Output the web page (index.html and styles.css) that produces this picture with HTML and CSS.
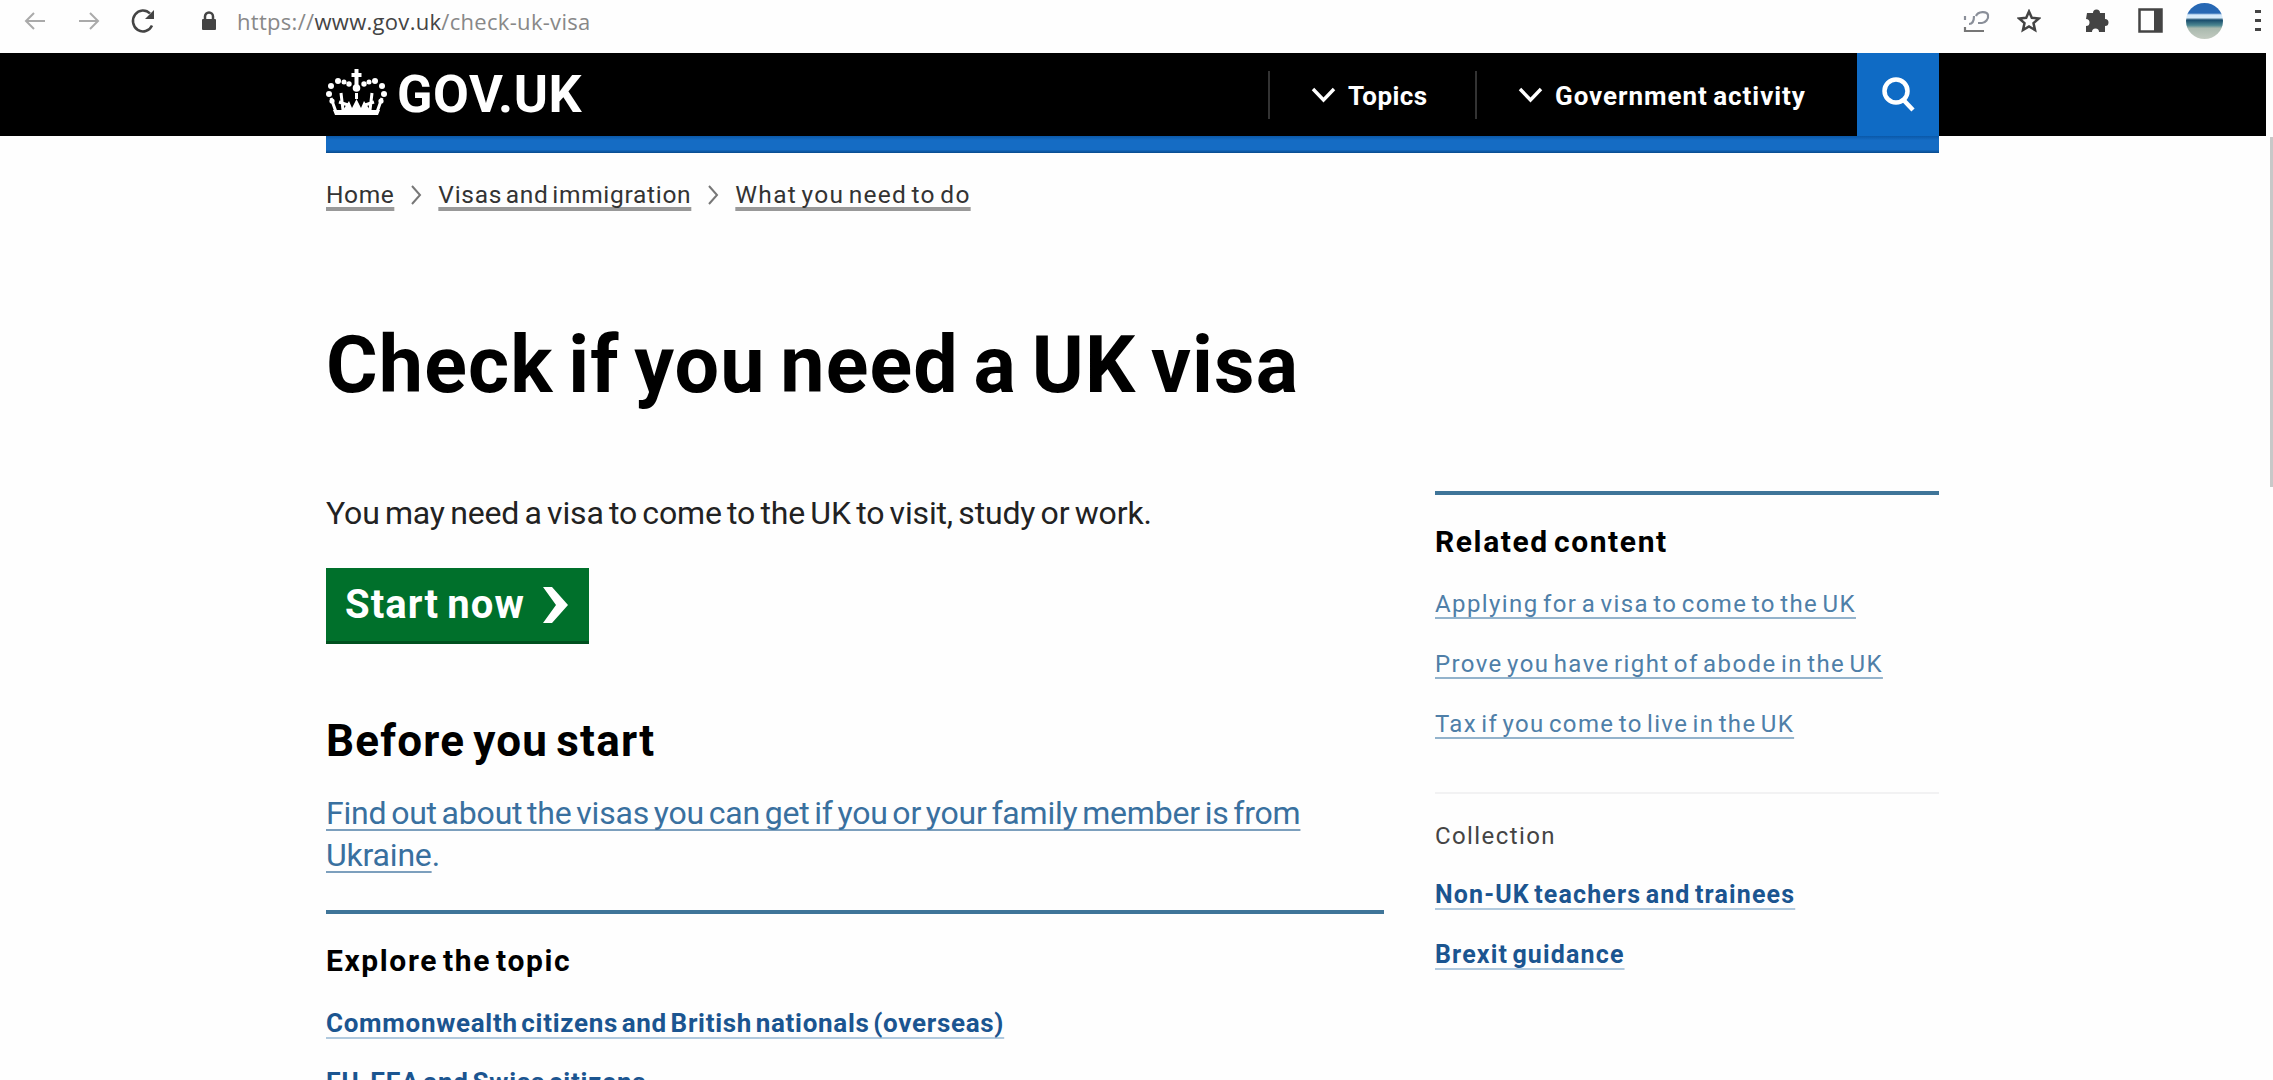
FILE: index.html
```html
<!DOCTYPE html>
<html lang="en">
<head>
    <meta charset="UTF-8">
    <meta name="viewport" content="width=device-width, initial-scale=1.0">
    <title>Check if you need a UK visa - GOV.UK</title>
    <link rel="stylesheet" href="styles.css">
</head>
<body>
    <div class="browser-bar">
        <svg class="back" width="22" height="20" viewBox="0 0 22 20"><path d="M21 10H2M10 2L2 10l8 8"/></svg>
        <svg class="forward" width="22" height="20" viewBox="0 0 22 20"><path d="M1 10h19M12 2l8 8-8 8"/></svg>
        <svg class="reload" width="26" height="26" viewBox="0 0 26 26"><path d="M22 17.5A10 10.5 0 1 1 20 5.500" /><path class="fill" d="M24 2v9h-9z"/></svg>
        <svg class="lock" width="14" height="20" viewBox="0 0 14 20"><path d="M3 9V5.500a4 4 0 0 1 8 0V9"/><rect class="fill" x="0" y="8" width="14" height="11" rx="1"/></svg>
        <span class="url">https://<b>www.gov.uk</b>/check-uk-visa</span>
        <div class="tools">
            <svg class="share" width="28" height="24" viewBox="0 0 28 24"><path d="M3 7v4M7 15c4 0 5-3 5-8M14 7c2-5 11-5 12-1s-3 8-6 8h-4"/><path class="base" d="M3 18v4h19"/></svg>
            <svg class="star" width="24" height="24" viewBox="0 0 24 24"><path d="M12 2.500l2.800 6.300 6.900.7-5.200 4.600 1.500 6.900-6-3.600-6 3.600 1.500-6.900-5.200-4.600 6.900-.7z"/></svg>
            <svg class="puzzle" width="25" height="25" viewBox="0 0 25 25"><path d="M3 5h6a3.500 3.500 0 0 1 7 0h5v6a3.500 3.500 0 0 1 0 7v6h-6a3.500 3.500 0 0 0-7 0H2v-6a3.500 3.500 0 0 0 0-7z"/></svg>
            <svg class="panel" width="25" height="25" viewBox="0 0 25 25"><rect x="1.500" y="1.500" width="22" height="22"/><path class="fill" d="M16 2h8v21h-8z"/></svg>
            <span class="avatar"></span>
            <svg class="dots" width="8" height="24" viewBox="0 0 8 24"><path d="M1 1h6v3H1zM1 10h6v3H1zM1 19h6v3H1z"/></svg>
        </div>
    </div>

    <header class="header">
        <div class="container header-inner">
            <a class="logo" href="#">
                <svg width="61" height="47" viewBox="0 0 61 47">
                    <path d="M7 41h47l-2 5H9z"/>
                    <path class="line" d="M5 29l5 14M56 29l-5 14M15 24l2 17M46 24l-2 17M13 33l9 3M48 33l-9 3M30.500 24v6"/>
                    <path d="M17 41l6-9 3 7 4.500-9 4.500 9 3-7 6 9z"/>
                    <path d="M28.500 0h4v20h-4zM25.500 4h10v4h-10z"/>
                    <circle cx="30.500" cy="19" r="3.800"/>
                    <circle cx="23" cy="15" r="2.700"/><circle cx="38" cy="15" r="2.700"/>
                    <circle cx="18" cy="13" r="2.500"/><circle cx="43" cy="13" r="2.500"/>
                    <circle cx="12" cy="12" r="3"/><circle cx="49" cy="12" r="3"/>
                    <circle cx="5" cy="17" r="3"/><circle cx="56" cy="17" r="3"/>
                    <circle cx="3" cy="25" r="3"/><circle cx="58" cy="25" r="3"/>
                    <circle cx="6" cy="32" r="2.600"/><circle cx="55" cy="32" r="2.600"/>
                </svg>
                <span>GOV.UK</span>
            </a>
            <nav class="nav">
                <a class="nav-item topics" href="#"><svg width="25" height="16" viewBox="0 0 25 16"><path d="M2 2l10.500 11L23 2"/></svg><span>Topics</span></a>
                <a class="nav-item activity" href="#"><svg width="25" height="16" viewBox="0 0 25 16"><path d="M2 2l10.500 11L23 2"/></svg><span>Government activity</span></a>
                <a class="search" href="#"><svg width="34" height="36" viewBox="0 0 34 36"><circle cx="14" cy="14" r="11.500"/><path d="M21.500 23L31 33"/></svg></a>
            </nav>
        </div>
    </header>

    <div class="container">
        <div class="blue-bar"></div>
        <nav class="breadcrumbs">
            <a class="crumb-home" href="#">Home</a>
            <svg width="12" height="20" viewBox="0 0 12 20"><path d="M2 1l8 9-8 9"/></svg>
            <a class="crumb-visas" href="#">Visas and immigration</a>
            <svg width="12" height="20" viewBox="0 0 12 20"><path d="M2 1l8 9-8 9"/></svg>
            <a class="crumb-what" href="#">What you need to do</a>
        </nav>
        <h1>Check if you need a UK visa</h1>
        <div class="columns">
            <main class="main">
                <p class="intro">You may need a visa to come to the UK to visit, study or work.</p>
                <a class="start" href="#"><span>Start now</span><svg width="26" height="36" viewBox="0 0 26 36"><path d="M0 0h9l16 18L9 36H0l13-18z"/></svg></a>
                <h2>Before you start</h2>
                <p class="ukraine"><a href="#">Find out about the visas you can get if you or your family member is from<br>Ukraine</a>.</p>
                <section class="explore">
                    <h3>Explore the topic</h3>
                    <a class="commonwealth" href="#">Commonwealth citizens and British nationals (overseas)</a>
                    <a class="swiss" href="#">EU, EEA and Swiss citizens</a>
                </section>
            </main>
            <aside class="related">
                <h3>Related content</h3>
                <ul>
                    <li><a class="applying" href="#">Applying for a visa to come to the UK</a></li>
                    <li><a class="prove" href="#">Prove you have right of abode in the UK</a></li>
                    <li><a class="tax" href="#">Tax if you come to live in the UK</a></li>
                </ul>
                <h4>Collection</h4>
                <ul class="bold">
                    <li><a class="teachers" href="#">Non-UK teachers and trainees</a></li>
                    <li><a class="brexit" href="#">Brexit guidance</a></li>
                </ul>
            </aside>
        </div>
    </div>
    <div class="scrollbar"></div>
</body>
</html>
```
FILE: styles.css
```css
* {
    box-sizing: border-box;
}
body {
    margin: 0;
    height: 1080px;
    overflow: hidden;
    background: #fefefe;
    color: #0b0c0c;
    font-family: Roboto, "Noto Sans", sans-serif;
    position: relative;
}
h1, h2, h3, h4, p, ul {
    margin: 0;
    padding: 0;
}
ul {
    list-style: none;
}
a {
    color: #39709f;
    text-decoration-thickness: 2px;
    text-decoration-skip-ink: none;
    text-underline-offset: 5px;
}
svg {
    display: block;
    flex: none;
}
.container {
    width: 1613px;
    margin-left: 326px;
}

/* browser toolbar */
.browser-bar {
    height: 53px;
    padding: 0 11px 12px 24px;
    display: flex;
    align-items: center;
}
.browser-bar svg {
    fill: none;
    stroke: #444;
    stroke-width: 2.5;
}
.browser-bar .fill {
    fill: #444;
    stroke: none;
}
.browser-bar .back, .browser-bar .forward {
    stroke: #aaa;
    stroke-width: 2;
}
.forward {
    margin-left: 32px;
}
.reload {
    margin-left: 30px;
}
.lock {
    margin-left: 46px;
}
.url {
    margin-left: 21px;
    font: 22px "Open Sans", sans-serif;
    letter-spacing: 0.3px;
    color: #888;
}
.url b {
    font-weight: normal;
    color: #444;
}
.tools {
    margin-left: auto;
    display: flex;
    align-items: center;
}
.browser-bar .share {
    stroke: #8a8f99;
    stroke-width: 2.2;
}
.share .base {
    stroke: #777;
}
.star {
    margin-left: 27px;
}
.browser-bar .puzzle, .browser-bar .dots {
    fill: #444;
    stroke: none;
}
.puzzle {
    margin-left: 43px;
}
.panel {
    margin-left: 29px;
}
.avatar {
    width: 37px;
    height: 36px;
    margin-left: 23px;
    border-radius: 50%;
    background: linear-gradient(#2768b4 28%, #d5eafa 33%, #d5eafa 41%, #174a6b 47%, #4c8791 62%, #a9b9ae 70%, #c3cbc1);
}
.dots {
    margin-left: 31px;
}

/* header */
.header {
    height: 83px;
    margin-right: 7px;
    background: #000;
}
.header-inner {
    height: 100%;
    display: flex;
    justify-content: space-between;
}
.header a {
    color: #fff;
    text-decoration: none;
    font-weight: bold;
}
.logo {
    display: flex;
    gap: 10px;
    padding-top: 16px;
    font-size: 52px;
    line-height: 52px;
    letter-spacing: 0.6px;
}
.logo svg {
    fill: #fff;
}
.logo .line {
    fill: none;
    stroke: #fff;
    stroke-width: 3;
}
.nav {
    display: flex;
    align-items: center;
}
.nav-item {
    height: 48px;
    display: flex;
    align-items: center;
    gap: 12px;
    padding-left: 41px;
    border-left: 2px solid #333;
    font-size: 26px;
}
.nav-item span {
    padding-top: 2px;
}
.nav-item svg {
    fill: none;
    stroke: #fff;
    stroke-width: 3.4;
}
.topics {
    width: 207px;
    letter-spacing: 0.4px;
}
.activity {
    width: 382px;
    letter-spacing: 0.95px;
    word-spacing: -2px;
}
.search {
    width: 82px;
    height: 83px;
    padding-left: 2px;
    display: flex;
    align-items: center;
    justify-content: center;
    background: #0f6bc5;
}
.search svg {
    fill: none;
    stroke: #fff;
    stroke-width: 4.5;
}
.blue-bar {
    height: 17px;
    background: linear-gradient(#0a58a8, #156cc4 25%, #156cc4 80%, #084a8c);
}

.breadcrumbs {
    display: flex;
    align-items: center;
    gap: 16px;
    height: 30px;
    margin-top: 27px;
    font-size: 24.5px;
    line-height: 30px;
    word-spacing: -3px;
}
.breadcrumbs a {
    color: #333;
    text-decoration-color: #999;
    text-decoration-thickness: 4px;
    text-underline-offset: 4px;
    white-space: nowrap;
}
.crumb-home {
    letter-spacing: 0.6px;
}
.crumb-visas {
    letter-spacing: 0.7px;
}
.crumb-what {
    letter-spacing: 1.3px;
}
.breadcrumbs svg {
    fill: none;
    stroke: #777;
    stroke-width: 2;
}
h1 {
    margin-top: 110px;
    font-size: 79px;
    line-height: 90px;
    letter-spacing: 1.1px;
    word-spacing: -6px;
    color: #000;
    white-space: nowrap;
}
.columns {
    display: flex;
    justify-content: space-between;
    margin-top: 81px;
}
.main {
    width: 1058px;
}
.intro, .ukraine {
    font-size: 32px;
    line-height: 42px;
    white-space: nowrap;
}
.intro {
    margin-top: 1px;
    letter-spacing: -0.15px;
    word-spacing: -2.5px;
    color: #222;
}
.start {
    width: 263px;
    height: 76px;
    margin-top: 34px;
    padding: 0 20px 0 19px;
    display: flex;
    align-items: center;
    justify-content: space-between;
    background: #00702b;
    border-bottom: 3px solid #00501f;
    color: #fff;
    font-size: 40px;
    font-weight: bold;
    letter-spacing: 1.1px;
    word-spacing: -3px;
    text-decoration: none;
}
.start svg {
    fill: #fff;
}
h2 {
    margin-top: 72px;
    margin-bottom: 26px;
    font-size: 44px;
    line-height: 50px;
    letter-spacing: 1.2px;
    word-spacing: -4px;
    color: #000;
}
.ukraine {
    color: #39709f;
    letter-spacing: -0.2px;
    word-spacing: -3px;
}
.ukraine a {
    text-decoration-color: #7c9fbd;
}
.explore {
    margin-top: 34px;
    padding-top: 29px;
    border-top: 4px solid #3f7599;
}
h3 {
    font-size: 30px;
    line-height: 36px;
    letter-spacing: 1.6px;
    word-spacing: -4px;
    color: #000;
}
.explore a {
    display: block;
    margin-top: 25px;
    font-size: 26px;
    line-height: 34px;
    font-weight: bold;
    letter-spacing: 0.7px;
    word-spacing: -3.5px;
    color: #1b5590;
    text-decoration-color: #b0c9de;
    white-space: nowrap;
}
.explore h3 + a {
    margin-top: 27px;
}
.explore .swiss {
    letter-spacing: 0.8px;
}

/* sidebar */
.related {
    width: 504px;
    border-top: 4px solid #3f7599;
    padding-top: 29px;
    font-size: 24px;
    line-height: 30px;
    word-spacing: -3px;
}
.related li {
    margin-bottom: 30px;
    white-space: nowrap;
}
.related ul {
    margin-top: 29px;
}
.related li a {
    color: #4f7fa8;
    text-decoration-color: #93b3cc;
}
.applying {
    letter-spacing: 1.4px;
}
.prove {
    letter-spacing: 1.4px;
}
.tax {
    letter-spacing: 1.35px;
}
.related h4 {
    border-top: 2px solid #f2f2f3;
    margin-top: 53px;
    padding-top: 27px;
    font-weight: normal;
    letter-spacing: 1.4px;
    color: #444;
}
.related .bold {
    margin-top: 29px;
    font-size: 25px;
    font-weight: bold;
    letter-spacing: 1.15px;
}
.related .bold a {
    color: #1b5590;
    text-decoration-color: #b0c9de;
}

/* page scrollbar thumb, drawn over the page edge */
.scrollbar {
    position: absolute;
    top: 137px;
    right: 0;
    width: 3px;
    height: 350px;
    background: #c8c8c8;
}
```
